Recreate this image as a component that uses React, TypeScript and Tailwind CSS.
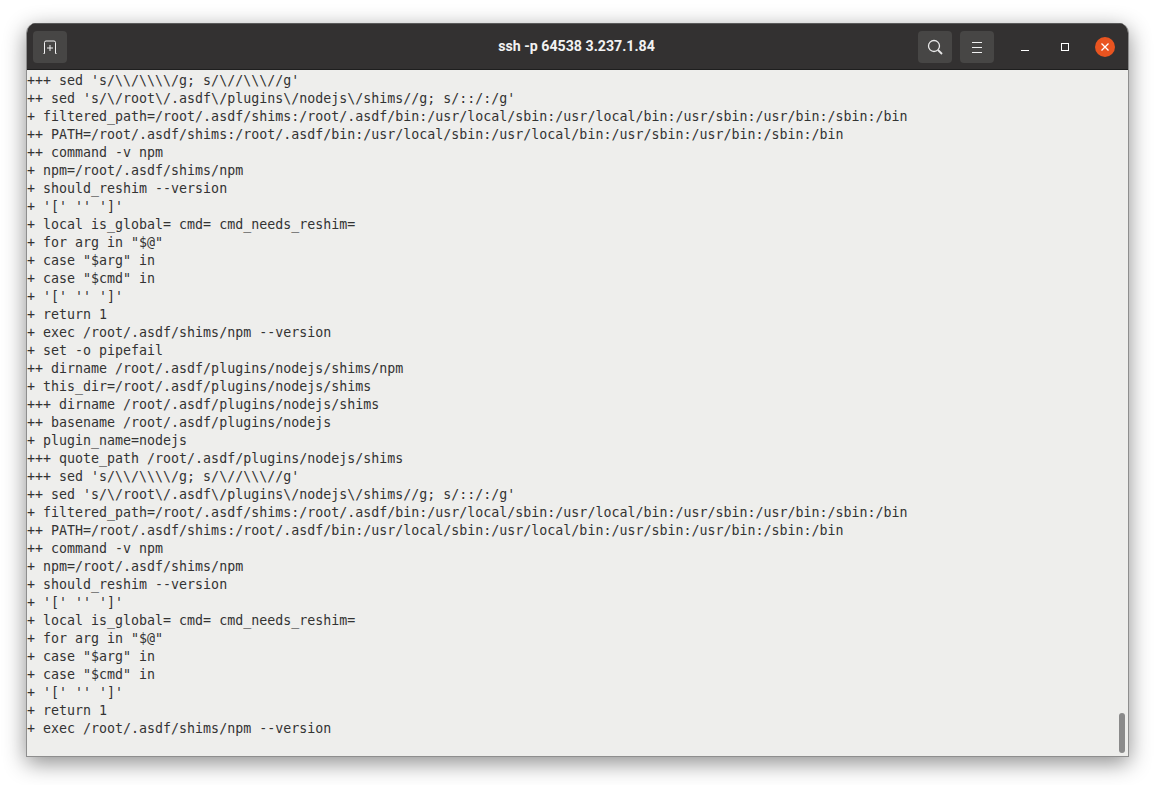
const lines = [
"+++ sed 's/\\\\/\\\\\\\\/g; s/\\//\\\\\\//g'",
"++ sed 's/\\/root\\/.asdf\\/plugins\\/nodejs\\/shims//g; s/::/:/g'",
"+ filtered_path=/root/.asdf/shims:/root/.asdf/bin:/usr/local/sbin:/usr/local/bin:/usr/sbin:/usr/bin:/sbin:/bin",
"++ PATH=/root/.asdf/shims:/root/.asdf/bin:/usr/local/sbin:/usr/local/bin:/usr/sbin:/usr/bin:/sbin:/bin",
"++ command -v npm",
"+ npm=/root/.asdf/shims/npm",
"+ should_reshim --version",
"+ '[' '' ']'",
"+ local is_global= cmd= cmd_needs_reshim=",
"+ for arg in \"$@\"",
"+ case \"$arg\" in",
"+ case \"$cmd\" in",
"+ '[' '' ']'",
"+ return 1",
"+ exec /root/.asdf/shims/npm --version",
"+ set -o pipefail",
"++ dirname /root/.asdf/plugins/nodejs/shims/npm",
"+ this_dir=/root/.asdf/plugins/nodejs/shims",
"+++ dirname /root/.asdf/plugins/nodejs/shims",
"++ basename /root/.asdf/plugins/nodejs",
"+ plugin_name=nodejs",
"+++ quote_path /root/.asdf/plugins/nodejs/shims",
"+++ sed 's/\\\\/\\\\\\\\/g; s/\\//\\\\\\//g'",
"++ sed 's/\\/root\\/.asdf\\/plugins\\/nodejs\\/shims//g; s/::/:/g'",
"+ filtered_path=/root/.asdf/shims:/root/.asdf/bin:/usr/local/sbin:/usr/local/bin:/usr/sbin:/usr/bin:/sbin:/bin",
"++ PATH=/root/.asdf/shims:/root/.asdf/bin:/usr/local/sbin:/usr/local/bin:/usr/sbin:/usr/bin:/sbin:/bin",
"++ command -v npm",
"+ npm=/root/.asdf/shims/npm",
"+ should_reshim --version",
"+ '[' '' ']'",
"+ local is_global= cmd= cmd_needs_reshim=",
"+ for arg in \"$@\"",
"+ case \"$arg\" in",
"+ case \"$cmd\" in",
"+ '[' '' ']'",
"+ return 1",
"+ exec /root/.asdf/shims/npm --version",
];

export default function App() {
  return (
    <div className="h-[785px] w-[1154px] overflow-hidden bg-white pl-[26px] pt-[23px]">
      <div className="relative flex h-[734px] w-[1103px] flex-col overflow-hidden rounded-t-[10px] border-x border-b border-[#8e8e8e] bg-[#eeeeec] shadow-[0_6px_22px_rgba(0,0,0,0.45)]">
        <div className="-mx-px flex h-[47px] shrink-0 items-center border-t border-b border-t-[#5a5a5a] border-b-[#1e1e1e] bg-[#333131] pl-[7px] pr-[14px] font-['Roboto',sans-serif]">
          <div className="flex flex-1 items-center">
            <button className="flex h-[32px] w-[34px] items-center justify-center rounded-[4px] bg-[#474645]">
              <svg width="16" height="16" viewBox="0 0 16 16" fill="none" stroke="#f2f2f2" strokeWidth="1">
                <path d="M1.500 14.500h1v-11a1.500 1.500 0 0 1 1.500-1.500h8a1.500 1.500 0 0 1 1.500 1.500v11h1" />
                <path d="M8 6v6M5 9h6" />
              </svg>
            </button>
          </div>
          <div className="ml-[5px] text-center text-[14.2px] font-bold leading-none text-[#f2f2f2]">ssh -p 64538 3.237.1.84</div>
          <div className="flex flex-1 items-center justify-end">
            <button className="flex h-[32px] w-[34px] items-center justify-center rounded-[4px] bg-[#474645]">
              <svg width="16" height="16" viewBox="0 0 16 16" fill="none" stroke="#e8e8e8" strokeWidth="1.300">
                <circle cx="7" cy="7" r="5.500" />
                <path d="M11 11l4 4" strokeWidth="1.800" />
              </svg>
            </button>
            <button className="ml-[8px] flex h-[32px] w-[34px] items-center justify-center rounded-[4px] bg-[#474645]">
              <svg width="12" height="12" viewBox="0 0 12 12" fill="none" stroke="#f0f0f0" strokeWidth="1">
                <path d="M1 1.500h10M1 6.500h10M1 11.500h10" />
              </svg>
            </button>
            <div className="ml-[21px] flex h-[20px] w-[20px] items-center justify-center">
              <div className="mt-[8px] h-[1px] w-[8px] bg-white" />
            </div>
            <div className="ml-[20px] flex h-[20px] w-[20px] items-center justify-center">
              <div className="h-[8px] w-[8px] border border-white" />
            </div>
            <div className="ml-[20px] flex h-[20px] w-[20px] items-center justify-center rounded-full bg-[#e95420]">
              <svg width="10" height="10" viewBox="0 0 10 10" fill="none" stroke="#fff" strokeWidth="1.300">
                <path d="M1.500 1.500l7 7M8.500 1.500l-7 7" />
              </svg>
            </div>
          </div>
        </div>
        <div className="flex-1 overflow-hidden pt-[2px] font-['DejaVu_Sans_Mono',monospace] text-[13.3px] leading-[18px] text-[#333333]">
          {lines.map((line, i) => (
            <div key={i} className="h-[18px] whitespace-pre">{line}</div>
          ))}
        </div>
        <div className="absolute bottom-[3px] right-[3px] h-[40px] w-[6px] rounded-full bg-[#8a8a8a]" />
      </div>
    </div>
  );
}
